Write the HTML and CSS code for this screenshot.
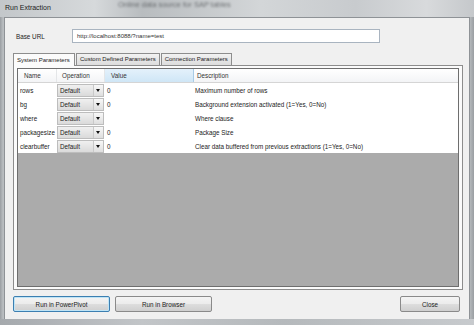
FILE: index.html
```html
<!DOCTYPE html>
<html>
<head>
    <title>Run Extraction</title>
    <link rel="stylesheet" href="styles.css">
</head>
<body>
    <div class="window">
        <div class="titlebar">
            <span class="title">Run Extraction</span>
            <span class="behind">Online data source for SAP tables</span>
        </div>
        <div class="client">
            <div class="url-row">
                <label class="url-label">Base URL</label>
                <div class="textbox">http://localhost:8088/?name=test</div>
            </div>

            <div class="tabs">
                <div class="tab active">System Parameters</div>
                <div class="tab">Custom Defined Parameters</div>
                <div class="tab">Connection Parameters</div>
            </div>
            <div class="tab-panel">
                <div class="grid">
                    <div class="row head">
                        <div class="c name">Name</div>
                        <div class="c op">Operation</div>
                        <div class="c val sorted">Value</div>
                        <div class="c desc">Description</div>
                    </div>
                    <div class="row">
                        <div class="c name">rows</div>
                        <div class="c op"><div class="combo"><span>Default</span><i class="arrow"></i></div></div>
                        <div class="c val">0</div>
                        <div class="c desc">Maximum number of rows</div>
                    </div>
                    <div class="row">
                        <div class="c name">bg</div>
                        <div class="c op"><div class="combo"><span>Default</span><i class="arrow"></i></div></div>
                        <div class="c val">0</div>
                        <div class="c desc">Background extension activated (1=Yes, 0=No)</div>
                    </div>
                    <div class="row">
                        <div class="c name">where</div>
                        <div class="c op"><div class="combo"><span>Default</span><i class="arrow"></i></div></div>
                        <div class="c val"></div>
                        <div class="c desc">Where clause</div>
                    </div>
                    <div class="row">
                        <div class="c name">packagesize</div>
                        <div class="c op"><div class="combo"><span>Default</span><i class="arrow"></i></div></div>
                        <div class="c val">0</div>
                        <div class="c desc">Package Size</div>
                    </div>
                    <div class="row">
                        <div class="c name">clearbuffer</div>
                        <div class="c op"><div class="combo"><span>Default</span><i class="arrow"></i></div></div>
                        <div class="c val">0</div>
                        <div class="c desc">Clear data buffered from previous extractions (1=Yes, 0=No)</div>
                    </div>
                    <div class="empty"></div>
                </div>
            </div>

            <div class="buttons">
                <button class="btn focused">Run in PowerPivot</button>
                <button class="btn">Run in Browser</button>
                <span class="spacer"></span>
                <button class="btn close">Close</button>
            </div>
        </div>
        <div class="frame-bottom"></div>
    </div>
</body>
</html>
```

FILE: styles.css
```css
html, body {
    margin: 0;
    padding: 0;
}
body {
    width: 474px;
    height: 325px;
    overflow: hidden;
    font-family: "Liberation Sans", Arial, sans-serif;
    font-size: 6.3px;
    color: #222;
    background: linear-gradient(90deg, #9a9ea2 0px, #b9bdc0 3px, #c9cccf 50%, #b9bdc0 99%, #9a9ea2 100%);
}
.window {
    height: 325px;
    display: flex;
    flex-direction: column;
}
.titlebar {
    height: 17px;
    position: relative;
    overflow: hidden;
    background: linear-gradient(90deg, #c3c7ca 0%, #d6d9db 20%, #b8bcbf 30%, #d3d6d8 55%, #c8cbce 75%, #d8dadc 90%, #c5c8cb 100%);
}
.title {
    position: absolute;
    left: 5px;
    top: 4px;
    font-size: 7px;
    color: #1b1b1b;
}
.behind {
    position: absolute;
    left: 118px;
    top: 0;
    font-size: 7.5px;
    color: #3a3d40;
    filter: blur(1.1px);
    opacity: 0.65;
}
.client {
    margin: 0 4px;
    flex: 1;
    background: #f0f0f0;
    border: 1px solid #8e9296;
    border-bottom: none;
    padding: 0 0 0 7px;
    display: flex;
    flex-direction: column;
}
.url-row {
    display: flex;
    align-items: center;
    margin-top: 11px;
    height: 14px;
}
.url-label {
    width: 56px;
    padding-left: 4px;
    color: #222;
}
.textbox {
    width: 302px;
    height: 12px;
    line-height: 12px;
    background: #fff;
    border: 1px solid #a9b4c0;
    padding-left: 4px;
    font-size: 6px;
    color: #333;
}
.tabs {
    display: flex;
    margin-top: 10px;
    margin-left: 1px;
    height: 12px;
    align-items: flex-end;
}
.tab {
    height: 11px;
    line-height: 11px;
    padding: 0 3px;
    margin-right: 1px;
    border: 1px solid #8d8d8d;
    border-bottom: none;
    background: linear-gradient(#f2f2f2, #dcdcdc);
    font-size: 6px;
    color: #222;
}
.tab.active {
    height: 12px;
    line-height: 12px;
    background: #fbfbfb;
    margin-bottom: -1px;
    position: relative;
    width: 54px;
}
.tab-panel {
    width: 450px;
    height: 225px;
    border: 1px solid #8d8d8d;
    background: #fbfbfb;
    padding: 2px 3px;
    box-sizing: border-box;
    margin-left: 1px;
}
.grid {
    height: 219px;
    border: 1px solid #6e6e6e;
    background: #ababab;
    display: flex;
    flex-direction: column;
    width: 442px;
    box-sizing: border-box;
}
.row {
    display: flex;
    height: 14px;
    background: #fff;
    align-items: center;
}
.row.head {
    height: 13px;
    background: linear-gradient(#ffffff, #f3f4f6);
    border-bottom: 1px solid #d5d5d5;
    color: #333;
}
.c {
    height: 100%;
    display: flex;
    align-items: center;
    box-sizing: border-box;
    white-space: nowrap;
    overflow: hidden;
}
.name {
    width: 39px;
    padding-left: 2px;
}
.op {
    width: 48px;
}
.val {
    width: 89px;
    padding-left: 2px;
}
.desc {
    flex: 1;
    padding-left: 1px;
}
.head .c {
    border-right: 1px solid #e4e6e8;
}
.head .name {
    padding-left: 6px;
}
.head .op {
    padding-left: 5px;
}
.head .desc {
    padding-left: 3px;
    border-right: none;
}
.head .sorted {
    background: linear-gradient(#e4f1fb, #cfe6f6);
    border-right: 1px solid #a8cbe6;
    padding-left: 6px;
}
.combo {
    width: 47px;
    height: 13px;
    display: flex;
    align-items: center;
    border: 1px solid #bdbdbd;
    box-sizing: border-box;
    background: linear-gradient(#f0f0f0, #dadada);
}
.combo span {
    flex: 1;
    padding-left: 2px;
}
.arrow {
    width: 9px;
    height: 11px;
    border-left: 1px solid #c9c9c9;
    background: linear-gradient(#f8f8f8, #dedede);
    position: relative;
}
.arrow::after {
    content: "";
    position: absolute;
    left: 2px;
    top: 4px;
    border-left: 2.5px solid transparent;
    border-right: 2.5px solid transparent;
    border-top: 3px solid #111;
}
.empty {
    flex: 1;
}
.buttons {
    display: flex;
    margin-top: 6px;
    margin-left: 1px;
    height: 16px;
    align-items: center;
}
.btn {
    width: 97px;
    height: 16px;
    margin: 0 5px 0 0;
    padding: 0;
    border: 1px solid #8a8a8a;
    border-radius: 2px;
    background: linear-gradient(#f4f4f4 0%, #ebebeb 50%, #dddddd 51%, #cfcfcf 100%);
    font-family: "Liberation Sans", Arial, sans-serif;
    font-size: 6.3px;
    color: #222;
}
.btn.focused {
    border-color: #3c7fb1;
    box-shadow: inset 0 0 0 1px #bfe4f6;
}
.spacer {
    flex: 1;
}
.btn.close {
    width: 60px;
    margin-right: 9px;
}
.frame-bottom {
    height: 6px;
    background: linear-gradient(90deg, #a5a9ad, #c2c5c8 30%, #b5b9bc 60%, #c7cacd);
}
```
